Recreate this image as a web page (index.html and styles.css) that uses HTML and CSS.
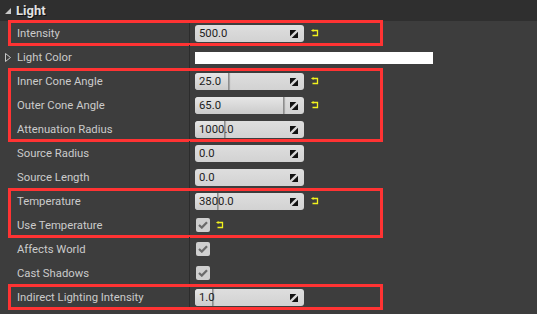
FILE: index.html
```html
<!DOCTYPE html>
<html lang="en">

<head>
  <meta charset="UTF-8">
  <meta name="viewport" content="width=device-width, initial-scale=1.0">
  <title>Light Details</title>
  <link rel="stylesheet" href="styles.css">
</head>

<body>
  <div class="panel">
    <div class="category">
      <svg class="collapse" width="6" height="6" viewBox="0 0 6 6"><polygon points="6,0 6,6 0,6" fill="#c8c8c8"/></svg>
      <span>Light</span>
    </div>

    <div class="rows">
      <div class="group">
        <div class="row">
          <div class="label">Intensity</div>
          <div class="value">
            <div class="field"><span class="num">500.0</span><svg class="spin" width="8" height="8" viewBox="0 0 8 8"><polygon points="0,0 6.3,0 0,6.3"/><polygon points="8,1.7 8,8 1.7,8"/></svg></div>
            <svg class="reset" width="8" height="8" viewBox="0 0 8 8"><path d="M2 1.5 H6.5 V6.5 H1.5" fill="none" stroke="#f2f21e" stroke-width="1.3"/><polygon points="0,1.5 2.5,0 2.5,3" fill="#f2f21e"/></svg>
          </div>
        </div>
      </div>

      <div class="row">
        <div class="label">
          <svg class="expand" width="6" height="9" viewBox="0 0 6 9"><polygon points="0.5,0.5 5.5,4.5 0.5,8.5" fill="none" stroke="#c8c8c8" stroke-width="1"/></svg>
          Light Color
        </div>
        <div class="value"><div class="color-bar"></div></div>
      </div>

      <div class="group">
        <div class="row">
          <div class="label">Inner Cone Angle</div>
          <div class="value">
            <div class="field"><div class="fill" style="width: 33px"></div><span class="num">25.0</span><svg class="spin" width="8" height="8" viewBox="0 0 8 8"><polygon points="0,0 6.3,0 0,6.3"/><polygon points="8,1.7 8,8 1.7,8"/></svg></div>
            <svg class="reset" width="8" height="8" viewBox="0 0 8 8"><path d="M2 1.5 H6.5 V6.5 H1.5" fill="none" stroke="#f2f21e" stroke-width="1.3"/><polygon points="0,1.5 2.5,0 2.5,3" fill="#f2f21e"/></svg>
          </div>
        </div>
        <div class="row">
          <div class="label">Outer Cone Angle</div>
          <div class="value">
            <div class="field"><div class="fill" style="width: 88px"></div><span class="num">65.0</span><svg class="spin" width="8" height="8" viewBox="0 0 8 8"><polygon points="0,0 6.3,0 0,6.3"/><polygon points="8,1.7 8,8 1.7,8"/></svg></div>
            <svg class="reset" width="8" height="8" viewBox="0 0 8 8"><path d="M2 1.5 H6.5 V6.5 H1.5" fill="none" stroke="#f2f21e" stroke-width="1.3"/><polygon points="0,1.5 2.5,0 2.5,3" fill="#f2f21e"/></svg>
          </div>
        </div>
        <div class="row">
          <div class="label">Attenuation Radius</div>
          <div class="value">
            <div class="field"><div class="fill" style="width: 29px"></div><span class="num">1000.0</span><svg class="spin" width="8" height="8" viewBox="0 0 8 8"><polygon points="0,0 6.3,0 0,6.3"/><polygon points="8,1.7 8,8 1.7,8"/></svg></div>
          </div>
        </div>
      </div>

      <div class="row">
        <div class="label">Source Radius</div>
        <div class="value">
          <div class="field"><span class="num">0.0</span><svg class="spin" width="8" height="8" viewBox="0 0 8 8"><polygon points="0,0 6.3,0 0,6.3"/><polygon points="8,1.7 8,8 1.7,8"/></svg></div>
        </div>
      </div>
      <div class="row">
        <div class="label">Source Length</div>
        <div class="value">
          <div class="field"><span class="num">0.0</span><svg class="spin" width="8" height="8" viewBox="0 0 8 8"><polygon points="0,0 6.3,0 0,6.3"/><polygon points="8,1.7 8,8 1.7,8"/></svg></div>
        </div>
      </div>

      <div class="group">
        <div class="row">
          <div class="label">Temperature</div>
          <div class="value">
            <div class="field"><div class="fill" style="width: 22px"></div><span class="num">3800.0</span><svg class="spin" width="8" height="8" viewBox="0 0 8 8"><polygon points="0,0 6.3,0 0,6.3"/><polygon points="8,1.7 8,8 1.7,8"/></svg></div>
            <svg class="reset" width="8" height="8" viewBox="0 0 8 8"><path d="M2 1.5 H6.5 V6.5 H1.5" fill="none" stroke="#f2f21e" stroke-width="1.3"/><polygon points="0,1.5 2.5,0 2.5,3" fill="#f2f21e"/></svg>
          </div>
        </div>
        <div class="row">
          <div class="label">Use Temperature</div>
          <div class="value">
            <div class="check"><svg width="10" height="8" viewBox="0 0 10 8"><path d="M1 4 L3.8 6.6 L9 1.2" fill="none" stroke="#6a6a6a" stroke-width="2.2"/></svg></div>
            <svg class="reset reset-check" width="8" height="8" viewBox="0 0 8 8"><path d="M2 1.5 H6.5 V6.5 H1.5" fill="none" stroke="#f2f21e" stroke-width="1.3"/><polygon points="0,1.5 2.5,0 2.5,3" fill="#f2f21e"/></svg>
          </div>
        </div>
      </div>

      <div class="row">
        <div class="label">Affects World</div>
        <div class="value">
          <div class="check"><svg width="10" height="8" viewBox="0 0 10 8"><path d="M1 4 L3.8 6.6 L9 1.2" fill="none" stroke="#6a6a6a" stroke-width="2.2"/></svg></div>
        </div>
      </div>
      <div class="row">
        <div class="label">Cast Shadows</div>
        <div class="value">
          <div class="check"><svg width="10" height="8" viewBox="0 0 10 8"><path d="M1 4 L3.8 6.6 L9 1.2" fill="none" stroke="#6a6a6a" stroke-width="2.2"/></svg></div>
        </div>
      </div>

      <div class="group">
        <div class="row">
          <div class="label">Indirect Lighting Intensity</div>
          <div class="value">
            <div class="field"><div class="fill" style="width: 17px"></div><span class="num">1.0</span><svg class="spin" width="8" height="8" viewBox="0 0 8 8"><polygon points="0,0 6.3,0 0,6.3"/><polygon points="8,1.7 8,8 1.7,8"/></svg></div>
          </div>
        </div>
      </div>
    </div>
  </div>
</body>

</html>
```

FILE: styles.css
```css
body {
  margin: 0;
  background-color: #3d3d3d;
  font-family: 'Roboto', 'Liberation Sans', sans-serif;
}

.panel {
  width: 537px;
  height: 314px;
  overflow: hidden;
  background-color: #3d3d3d;
}

.category {
  height: 21px;
  background-color: #2f2f2f;
  display: flex;
  align-items: center;
  color: #e2e2e2;
  font-size: 13px;
  font-weight: bold;
  text-shadow: 1px 1px 0 #111;
}

.collapse {
  margin: 0 5px 0 5px;
}

.group {
  position: relative;
}

/* highlight frame drawn over the grouped rows */
.group::after {
  content: '';
  position: absolute;
  left: 8px;
  width: 369px;
  top: -1px;
  bottom: -1px;
  border: 3px solid #ff3333;
  pointer-events: none;
}

.row {
  height: 24px;
  display: flex;
}

.label {
  width: 190px;
  border-right: 1px solid #2c2c2c;
  display: flex;
  align-items: center;
  padding-left: 17px;
  box-sizing: border-box;
  color: #cbcbcb;
  font-size: 11.3px;
  position: relative;
}

.expand {
  position: absolute;
  left: 5px;
  top: 8px;
}

.value {
  display: flex;
  align-items: center;
  padding-left: 5px;
}

.field {
  position: relative;
  width: 109px;
  height: 17px;
  border-radius: 3px;
  background: linear-gradient(#dedede, #d2d2d2);
  display: flex;
  align-items: center;
  overflow: hidden;
}

.fill {
  position: absolute;
  left: 0;
  top: 0;
  bottom: 0;
  background: linear-gradient(#e6e6e6, #cbcbcb);
  border-right: 1px solid #8e8e8e;
  box-shadow: 1px 0 1px rgba(0, 0, 0, 0.25);
  border-radius: 3px 0 0 3px;
}

.num {
  position: relative;
  padding-left: 4px;
  font-size: 11.3px;
  color: #1c1c1c;
}

.spin {
  position: absolute;
  right: 6px;
  top: 5px;
  fill: #111;
}

.reset {
  margin-left: 7px;
}

.reset-check {
  margin-left: 6px;
}

.color-bar {
  width: 238px;
  height: 12px;
  background-color: #ffffff;
  margin-top: 1px;
}

.check {
  width: 14px;
  height: 14px;
  margin-left: 1px;
  border-radius: 2px;
  background-color: #cfcfcf;
  display: flex;
  align-items: center;
  justify-content: center;
}
```
